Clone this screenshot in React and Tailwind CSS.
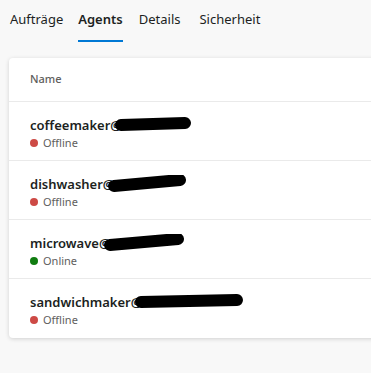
import React from 'react';

const tabs = [
    { label: 'Aufträge', gap: 'mr-[15px]' },
    { label: 'Agents', gap: 'mr-[16px]' },
    { label: 'Details', gap: 'mr-[19px]' },
    { label: 'Sicherheit', gap: '' },
];

// black marker strokes that hide the host names
const agents = [
    { name: 'coffeemaker@', online: false, scribble: { w: 78, x1: 6, y1: 9, x2: 70, y2: 7 } },
    { name: 'dishwasher@', online: false, scribble: { w: 78, x1: 6, y1: 11, x2: 72, y2: 5 } },
    { name: 'microwave@', online: true, scribble: { w: 80, x1: 6, y1: 11, x2: 74, y2: 5 } },
    { name: 'sandwichmaker@', online: false, scribble: { w: 108, x1: 6, y1: 9, x2: 102, y2: 7 } },
];

const Scribble = ({ w, x1, y1, x2, y2 }) => (
    <svg width={w} height="18" viewBox={`0 0 ${w} 18`} className="-ml-[7px] block">
        <path d={`M${x1} ${y1} L${x2} ${y2}`} stroke="#000" strokeWidth="12" strokeLinecap="round" fill="none" />
    </svg>
);

const App = () => {
    return (
        <div className="h-[373px] w-[371px] overflow-hidden bg-[#f8f8f8] font-['Noto_Sans',sans-serif] text-[#201f1e]">
            <div className="flex h-[42px] items-start pl-[10px] pt-[9px] text-[13px]">
                {tabs.map((t) => (
                    <div
                        key={t.label}
                        className={`${t.gap} flex h-[33px] flex-col justify-start ${t.label === 'Agents' ? 'font-semibold' : ''}`}
                    >
                        <span className="leading-[20px]">{t.label}</span>
                        {t.label === 'Agents' && <div className="mt-[11px] h-[2px] w-full bg-[#0078d4]" />}
                    </div>
                ))}
            </div>
            <div className="mt-[16px] ml-[9px] w-[400px] rounded-[4px] bg-white shadow-[0_1px_4px_rgba(0,0,0,0.16)]">
                <div className="flex h-[44px] items-center border-b border-[#eaeaea] pl-[21px] text-[11px] font-medium text-[#605e5c]">
                    Name
                </div>
                {agents.map((a, i) => (
                    <div
                        key={a.name}
                        className={`flex h-[59px] flex-col pt-[13px] pl-[21px] ${i < agents.length - 1 ? 'border-b border-[#eaeaea]' : ''}`}
                    >
                        <div className="flex items-center text-[13px] font-semibold leading-[20px]">
                            <span>{a.name}</span>
                            <Scribble {...a.scribble} />
                        </div>
                        <div className="flex items-center text-[11px] leading-[16px] text-[#605e5c]">
                            <span className={`mr-[5px] h-[8px] w-[8px] rounded-full ${a.online ? 'bg-[#107c10]' : 'bg-[#cd4a45]'}`} />
                            {a.online ? 'Online' : 'Offline'}
                        </div>
                    </div>
                ))}
            </div>
        </div>
    );
};

export default App;
